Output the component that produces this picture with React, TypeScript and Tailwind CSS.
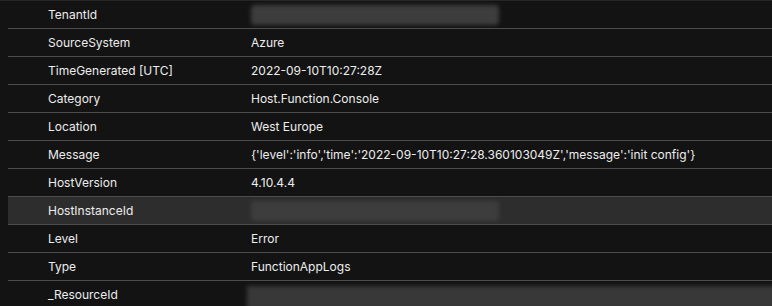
import React from "react";

type Row = { label: string; value?: string; redacted?: "short" | "wide"; active?: boolean };

const rows: Row[] = [
  { label: "TenantId", redacted: "short" },
  { label: "SourceSystem", value: "Azure" },
  { label: "TimeGenerated [UTC]", value: "2022-09-10T10:27:28Z" },
  { label: "Category", value: "Host.Function.Console" },
  { label: "Location", value: "West Europe" },
  {
    label: "Message",
    value: "{'level':'info','time':'2022-09-10T10:27:28.360103049Z','message':'init config'}",
  },
  { label: "HostVersion", value: "4.10.4.4" },
  { label: "HostInstanceId", redacted: "short", active: true },
  { label: "Level", value: "Error" },
  { label: "Type", value: "FunctionAppLogs" },
  { label: "_ResourceId", redacted: "wide" },
];

const App = () => {
  return (
    <div
      className="w-[772px] h-[306px] overflow-hidden bg-[#131313] text-[12px] text-[#ededed]"
      style={{ fontFamily: "Inter, 'Liberation Sans', sans-serif" }}
    >
      <div className="h-px bg-[#262626]" />
      {rows.map((row) => (
        <div
          key={row.label}
          className={`ml-2 flex h-[28px] items-center border-b border-[#4d4d4d] ${
            row.active ? "bg-[#2d2d2d]" : ""
          }`}
        >
          <div className="w-[243px] shrink-0 pl-10">{row.label}</div>
          <div className="flex-1 min-w-0 whitespace-nowrap">
            {row.value}
            {row.redacted === "short" && (
              <div className="h-[20px] w-[248px] rounded-sm bg-[#3d3d3d] blur-[2px]" />
            )}
            {row.redacted === "wide" && (
              <div className="-ml-1 mt-1.5 h-[24px] w-[540px] bg-[#383838] blur-[2px]" />
            )}
          </div>
        </div>
      ))}
    </div>
  );
};

export default App;
